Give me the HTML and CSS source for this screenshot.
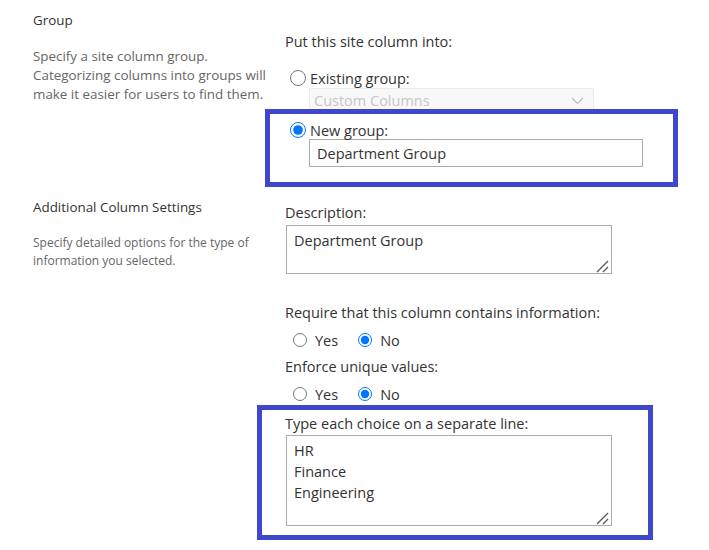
FILE: index.html
```html
<!DOCTYPE html>
<html lang="en">

<head>
    <meta charset="UTF-8">
    <meta name="viewport" content="width=device-width, initial-scale=1.0">
    <title>Site Column Settings</title>
    <link rel="stylesheet" href="styles.css">
</head>

<body>
    <main class="settings">
        <section class="row row-group">
            <div class="info">
                <h3>Group</h3>
                <p class="info-text">Specify a site column group. Categorizing columns into groups will make it easier for users to find them.</p>
            </div>
            <div class="fields">
                <div class="lead">Put this site column into:</div>
                <label class="option option-existing">
                    <input type="radio" name="group">
                    <span>Existing group:</span>
                </label>
                <div class="dropdown">
                    <span>Custom Columns</span>
                    <svg width="13" height="8" viewBox="0 0 13 8">
                        <polyline points="1,1 6.5,6.5 12,1" fill="none" stroke="#bdbdbd" stroke-width="1.2"></polyline>
                    </svg>
                </div>
                <div class="new-group">
                    <label class="option">
                        <input type="radio" name="group" checked>
                        <span>New group:</span>
                    </label>
                    <input type="text" class="text-input" value="Department Group">
                    <span class="highlight highlight-group"></span>
                </div>
            </div>
        </section>

        <section class="row row-additional">
            <div class="info">
                <h3>Additional Column Settings</h3>
                <p class="info-text small">Specify detailed options for the type of information you selected.</p>
            </div>
            <div class="fields">
                <div class="lead">Description:</div>
                <div class="area-wrap">
                    <textarea class="area area-description">Department Group</textarea>
                    <svg class="grip" width="14" height="14" viewBox="0 0 14 14">
                        <path d="M1 13 L12 2 M7 13 L12 8" stroke="#5a5a5a" stroke-width="1.4" fill="none"></path>
                    </svg>
                </div>

                <div class="lead lead-require">Require that this column contains information:</div>
                <div class="yes-no">
                    <label><input type="radio" name="required"> Yes</label>
                    <label><input type="radio" name="required" checked> No</label>
                </div>

                <div class="lead lead-unique">Enforce unique values:</div>
                <div class="yes-no">
                    <label><input type="radio" name="unique"> Yes</label>
                    <label><input type="radio" name="unique" checked> No</label>
                </div>

                <div class="choices">
                    <div class="lead">Type each choice on a separate line:</div>
                    <div class="area-wrap">
                        <textarea class="area area-choices">HR
Finance
Engineering</textarea>
                        <svg class="grip" width="14" height="14" viewBox="0 0 14 14">
                            <path d="M1 13 L12 2 M7 13 L12 8" stroke="#5a5a5a" stroke-width="1.4" fill="none"></path>
                        </svg>
                    </div>
                    <span class="highlight highlight-choices"></span>
                </div>
            </div>
        </section>
    </main>
</body>

</html>
```

FILE: styles.css
```css
body {
    margin: 0;
    padding: 0;
    background-color: #fff;
    color: #333;
    font-family: "Open Sans", Arial, sans-serif;
}

.settings {
    padding: 10px 0 24px;
}

.row {
    display: flex;
}

.row-additional {
    padding-top: 30px;
}

.info {
    width: 285px;
    padding-left: 33px;
    box-sizing: border-box;
    flex-shrink: 0;
}

.info h3 {
    margin: 0;
    font-size: 13.4px;
    font-weight: normal;
    line-height: 20px;
    color: #333;
}

.info-text {
    margin: 17px 0 0;
    padding-right: 10px;
    font-size: 13.4px;
    line-height: 19px;
    color: #666;
}

.info-text.small {
    font-size: 12px;
    line-height: 18px;
}

.fields {
    flex: 1;
    font-size: 14.5px;
}

.lead {
    line-height: 20px;
}

.row-group .lead {
    margin-top: 22px;
}

.row-additional .lead {
    margin-top: 6px;
}

.option {
    display: flex;
    align-items: center;
    gap: 4px;
    height: 18px;
    padding-left: 5px;
}

.option input {
    width: 16px;
    height: 16px;
    margin: 0;
}

.option-existing {
    margin-top: 17px;
}

.dropdown {
    display: flex;
    align-items: center;
    justify-content: space-between;
    box-sizing: border-box;
    width: 285px;
    height: 25px;
    margin: 1px 0 0 24px;
    padding: 0 9px 0 4px;
    background-color: #f8f8f8;
    border: 1px solid #ececec;
    color: #c6c6c6;
}

.new-group {
    position: relative;
    margin-top: 8px;
}

.text-input {
    display: block;
    box-sizing: border-box;
    width: 334px;
    height: 28px;
    margin-left: 24px;
    padding: 0 7px;
    border: 1px solid #ababab;
    font-family: inherit;
    font-size: 14.5px;
    color: #333;
}

.area-wrap {
    position: relative;
    width: 326px;
    margin-left: 1px;
}

.area {
    display: block;
    box-sizing: border-box;
    width: 100%;
    padding: 5px 7px;
    border: 1px solid #ababab;
    font-family: inherit;
    font-size: 14.5px;
    line-height: 20px;
    color: #333;
    resize: none;
}

.grip {
    position: absolute;
    right: 2px;
    bottom: 1px;
}

.area-description {
    height: 49px;
}

.lead + .area-wrap {
    margin-top: 2px;
}

.lead.lead-require {
    margin-top: 29px;
}

.lead.lead-unique {
    margin-top: 7px;
}

.yes-no {
    display: flex;
    align-items: center;
    gap: 20px;
    height: 20px;
    margin-top: 7px;
    padding-left: 8px;
}

.yes-no label {
    display: flex;
    align-items: center;
    gap: 8px;
}

.yes-no input {
    width: 14px;
    height: 14px;
    margin: 0;
}

.choices {
    position: relative;
    margin-top: 10px;
}

.choices .lead {
    margin-top: 0;
}

.choices .lead + .area-wrap {
    margin-top: 1px;
}

.area-choices {
    height: 91px;
    padding-top: 4px;
    line-height: 21px;
}

/* annotation frames drawn over the form */
.highlight {
    position: absolute;
    box-sizing: border-box;
    border: 5px solid #3f48cc;
    pointer-events: none;
}

.highlight-group {
    left: -20px;
    top: -12px;
    width: 413px;
    height: 78px;
}

.highlight-choices {
    left: -28px;
    top: -9px;
    width: 396px;
    height: 135px;
}
```
